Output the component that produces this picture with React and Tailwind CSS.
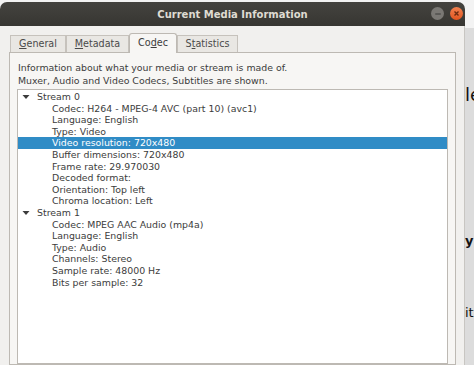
import React from "react";

const rows = [
  { t: "Stream 0", lvl: 0 },
  { t: "Codec: H264 - MPEG-4 AVC (part 10) (avc1)", lvl: 1 },
  { t: "Language: English", lvl: 1 },
  { t: "Type: Video", lvl: 1 },
  { t: "Video resolution: 720x480", lvl: 1, sel: true },
  { t: "Buffer dimensions: 720x480", lvl: 1 },
  { t: "Frame rate: 29.970030", lvl: 1 },
  { t: "Decoded format:", lvl: 1 },
  { t: "Orientation: Top left", lvl: 1 },
  { t: "Chroma location: Left", lvl: 1 },
  { t: "Stream 1", lvl: 0 },
  { t: "Codec: MPEG AAC Audio (mp4a)", lvl: 1 },
  { t: "Language: English", lvl: 1 },
  { t: "Type: Audio", lvl: 1 },
  { t: "Channels: Stereo", lvl: 1 },
  { t: "Sample rate: 48000 Hz", lvl: 1 },
  { t: "Bits per sample: 32", lvl: 1 },
];

function Tab({ children, active, w }) {
  if (active) {
    return (
      <div
        className={`${w} h-[20px] -mb-[1px] flex items-center justify-center border border-b-0 border-[#bdb9b3] bg-[#f7f6f4] rounded-t-[3px] text-[#3c3c3c] relative z-10`}
      >
        {children}
      </div>
    );
  }
  return (
    <div
      className={`${w} h-[17px] flex items-center justify-center border border-b-0 border-[#c6c2bc] bg-[#e9e7e3] text-[#4a4a4a]`}
    >
      {children}
    </div>
  );
}

export default function App() {
  return (
    <div
      className="w-[474px] h-[365px] overflow-hidden flex bg-[#f3f3f3]"
      style={{ fontFamily: '"DejaVu Sans", "Liberation Sans", sans-serif' }}
    >
      <div className="w-[465px] flex flex-col pt-[2px] shrink-0">
        {/* Title bar */}
        <div className="h-[24px] rounded-t-[7px] bg-gradient-to-b from-[#44433f] to-[#373632] flex items-center relative">
          <div className="flex-1 text-center text-[10px] font-bold text-[#dfdbd2] pt-[1px]">
            Current Media Information
          </div>
          <div className="absolute right-[2px] top-[5px] flex gap-[6px] items-center">
            <div className="w-[13px] h-[13px] rounded-full bg-[#7a7874] flex items-center justify-center">
              <div className="w-[6px] h-[2px] bg-[#5a5956] rounded" />
            </div>
            <div className="w-[13px] h-[13px] rounded-full bg-gradient-to-b from-[#f2814f] to-[#e0531c] flex items-center justify-center">
              <svg width="7" height="7" viewBox="0 0 7 7">
                <path d="M1.5 1.5 L5.5 5.5 M5.5 1.5 L1.5 5.5" stroke="#6b2a10" strokeWidth="1.4" />
              </svg>
            </div>
          </div>
        </div>
        {/* Body */}
        <div className="flex-1 bg-[#f1f0ee] pl-[9px] pr-[8px] pt-[7px] flex flex-col border-r border-[#c8c6c2]">
          <div className="flex items-end text-[9.6px] pl-[1px]">
            <Tab w="w-[56px]">
              <span><u>G</u>eneral</span>
            </Tab>
            <Tab w="w-[63px]">
              <span><u>M</u>etadata</span>
            </Tab>
            <Tab w="w-[48px]" active>
              <span>Co<u>d</u>ec</span>
            </Tab>
            <Tab w="w-[61px]">
              <span>S<u>t</u>atistics</span>
            </Tab>
          </div>
          <div className="flex-1 border border-[#bdb9b3] bg-[#f7f6f4] px-[7px] pt-[9px] flex flex-col">
            <div className="text-[9.4px] leading-[12.5px] text-[#3c3c3c] pl-[1px]">
              <div>Information about what your media or stream is made of.</div>
              <div>Muxer, Audio and Video Codecs, Subtitles are shown.</div>
            </div>
            <div className="mt-[2px] flex-1 border border-[#bdb9b3] bg-white pt-[1px]">
              {rows.map((r, i) => (
                <div
                  key={i}
                  className={`h-[11.6px] flex items-center text-[9.4px] leading-none whitespace-nowrap ${
                    r.sel ? "bg-[#308cc6] text-white" : "text-[#3c3c3c]"
                  }`}
                >
                  {r.lvl === 0 ? (
                    <div className="flex items-center">
                      <svg width="8" height="6" viewBox="0 0 8 6" className="ml-[4px] mr-[7px]">
                        <path d="M0.5 1 L7.5 1 L4 5 Z" fill="#3c3c3c" />
                      </svg>
                      <span>{r.t}</span>
                    </div>
                  ) : (
                    <span className="pl-[34px]">{r.t}</span>
                  )}
                </div>
              ))}
            </div>
          </div>
        </div>
      </div>
      {/* background page sliver */}
      <div className="flex-1 bg-[#dcdcdc] flex flex-col text-[#111] overflow-hidden">
        <div className="h-[28px] bg-[#f3f3f3]" />
        <div className="mt-[58px] text-[18px] leading-[18px]">
          le
        </div>
        <div className="mt-[130px] text-[13px] leading-[14px] font-bold">y</div>
        <div className="mt-[58px] text-[13px] leading-[14px]">it</div>
      </div>
    </div>
  );
}
